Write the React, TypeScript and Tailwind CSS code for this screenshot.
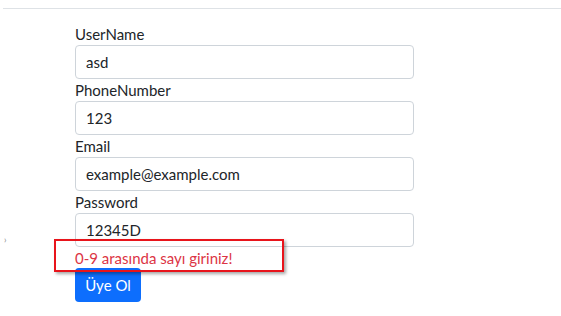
import React from 'react';

const fields = [
  { label: 'UserName', value: 'asd' },
  { label: 'PhoneNumber', value: '123' },
  { label: 'Email', value: 'example@example.com' },
  { label: 'Password', value: '12345D' },
];

export default function App() {
  return (
    <div className="relative h-[316px] w-[561px] overflow-hidden bg-white text-[#212529]" style={{ fontFamily: 'Lato, sans-serif' }}>
      <div className="ml-[3px] mt-[8px] h-px bg-[#dee2e6]" />
      <div className="ml-[75px] w-[339px] pt-[14px]">
        {fields.map((f) => (
          <div key={f.label}>
            <label className="block h-[22px] text-[15px] leading-[22px]">{f.label}</label>
            <input
              readOnly
              value={f.value}
              className="block h-[34px] w-full rounded-[4px] border border-[#ced4da] px-[10px] text-[15px] text-[#212529] outline-none"
            />
          </div>
        ))}
        <div className="h-[21px] text-[15px] leading-[22px] text-[#dc3545]">0-9 arasında sayı giriniz!</div>
        <button className="h-[34px] w-[66px] rounded-[4px] bg-[#0d6efd] text-[15px] text-white">Üye Ol</button>
      </div>
      <div className="absolute left-[54px] top-[239px] h-[33px] w-[230px] border-2 border-[#e8141b] shadow-[2px_2px_3px_rgba(0,0,0,0.35)]" />
      <div className="absolute left-[4px] top-[235px] text-[9px] leading-none text-[#888]">›</div>
    </div>
  );
}
